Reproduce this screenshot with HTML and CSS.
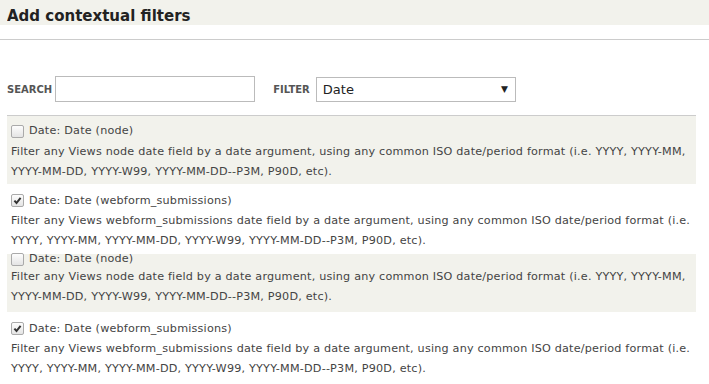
FILE: index.html
```html
<!DOCTYPE html>
<html>
<head>
<meta charset="utf-8">
<link rel="stylesheet" href="styles.css">
</head>
<body>
<div class="titlebar"><h1 class="title">Add contextual filters</h1></div>
<div class="rule"></div>
<div class="controls">
  <label class="ctl-label">SEARCH</label>
  <input class="search" type="text">
  <label class="ctl-label filter-label">FILTER</label>
  <div class="select"><span>Date</span><span class="arrow">▼</span></div>
</div>
<div class="list">
  <div class="row odd">
    <div class="item-label"><span class="cb"></span>Date: Date (node)</div>
    <div class="desc">Filter any Views node date field by a date argument, using any common ISO date/period format (i.e. YYYY, YYYY-MM, YYYY-MM-DD, YYYY-W99, YYYY-MM-DD--P3M, P90D, etc).</div>
  </div>
  <div class="row even">
    <div class="item-label"><span class="cb checked"><svg viewBox="0 0 13 13" width="13" height="13"><path d="M3.4 6.6 L5.5 9 L9.6 3.8" fill="none" stroke="#333" stroke-width="2"/></svg></span>Date: Date (webform_submissions)</div>
    <div class="desc">Filter any Views webform_submissions date field by a date argument, using any common ISO date/period format (i.e. YYYY, YYYY-MM, YYYY-MM-DD, YYYY-W99, YYYY-MM-DD--P3M, P90D, etc).</div>
  </div>
  <div class="row odd tight">
    <div class="item-label"><span class="cb"></span>Date: Date (node)</div>
    <div class="desc">Filter any Views node date field by a date argument, using any common ISO date/period format (i.e. YYYY, YYYY-MM, YYYY-MM-DD, YYYY-W99, YYYY-MM-DD--P3M, P90D, etc).</div>
  </div>
  <div class="row even">
    <div class="item-label"><span class="cb checked"><svg viewBox="0 0 13 13" width="13" height="13"><path d="M3.4 6.6 L5.5 9 L9.6 3.8" fill="none" stroke="#333" stroke-width="2"/></svg></span>Date: Date (webform_submissions)</div>
    <div class="desc">Filter any Views webform_submissions date field by a date argument, using any common ISO date/period format (i.e. YYYY, YYYY-MM, YYYY-MM-DD, YYYY-W99, YYYY-MM-DD--P3M, P90D, etc).</div>
  </div>
</div>
</body>
</html>
```
FILE: styles.css
```css
html, body {
  margin: 0;
  padding: 0;
  background: #fff;
  font-family: "DejaVu Sans", Verdana, sans-serif;
  color: #333;
  overflow: hidden;
}
.titlebar {
  background: #f2f2ec;
  height: 25px;
  padding-left: 7px;
}
.title {
  margin: 0;
  font-size: 15px;
  font-weight: bold;
  color: #222;
  line-height: 25px;
  padding-top: 4px;
  height: 21px;
  overflow: hidden;
}
.rule {
  margin-top: 14px;
  border-top: 1px solid #ccc;
}
.controls {
  display: flex;
  align-items: center;
  padding-left: 7px;
  margin-top: 36px;
  height: 26px;
}
.ctl-label {
  font-size: 10px;
  font-weight: bold;
  color: #555;
  margin-right: 3px;
}
.filter-label {
  margin-left: 18px;
  margin-right: 6px;
}
.search {
  box-sizing: border-box;
  width: 200px;
  height: 26px;
  border: 1px solid #bbb;
  margin: 0;
  padding: 0;
}
.select {
  box-sizing: border-box;
  width: 200px;
  height: 25px;
  border: 1px solid #bbb;
  display: flex;
  align-items: center;
  justify-content: space-between;
  padding: 0 7px 0 6px;
  font-size: 13px;
  color: #222;
  background: #fff;
}
.arrow {
  font-size: 9px;
  color: #222;
}
.list {
  margin: 13px 13px 0 7px;
  border-top: 1px solid #ccc;
}
.row {
  padding: 7px 0 0 4px;
  font-size: 11.2px;
  letter-spacing: 0.2px;
  line-height: 20px;
  color: #444;
}
.row.odd {
  background: #f2f2ec;
  height: 61px;
}
.row.even {
  padding-top: 8px;
  height: 62px;
}
.row.tight {
  padding-top: 0;
  height: 58px;
}
.item-label {
  display: flex;
  align-items: center;
  height: 16px;
  margin-bottom: 3px;
}
.row.even .item-label {
  height: 17px;
  margin-bottom: 2px;
}
.row.tight .item-label {
  height: 10px;
  margin-bottom: 3px;
}
.cb {
  box-sizing: border-box;
  width: 13px;
  height: 13px;
  border: 1px solid #aaa;
  border-radius: 2px;
  background: linear-gradient(#fdfdfd, #e4e4e4);
  margin-right: 5px;
  display: inline-flex;
  align-items: center;
  justify-content: center;
  flex: none;
}
.cb svg {
  display: block;
  margin: -1px;
}
.desc {
  margin: 0;
}
```
